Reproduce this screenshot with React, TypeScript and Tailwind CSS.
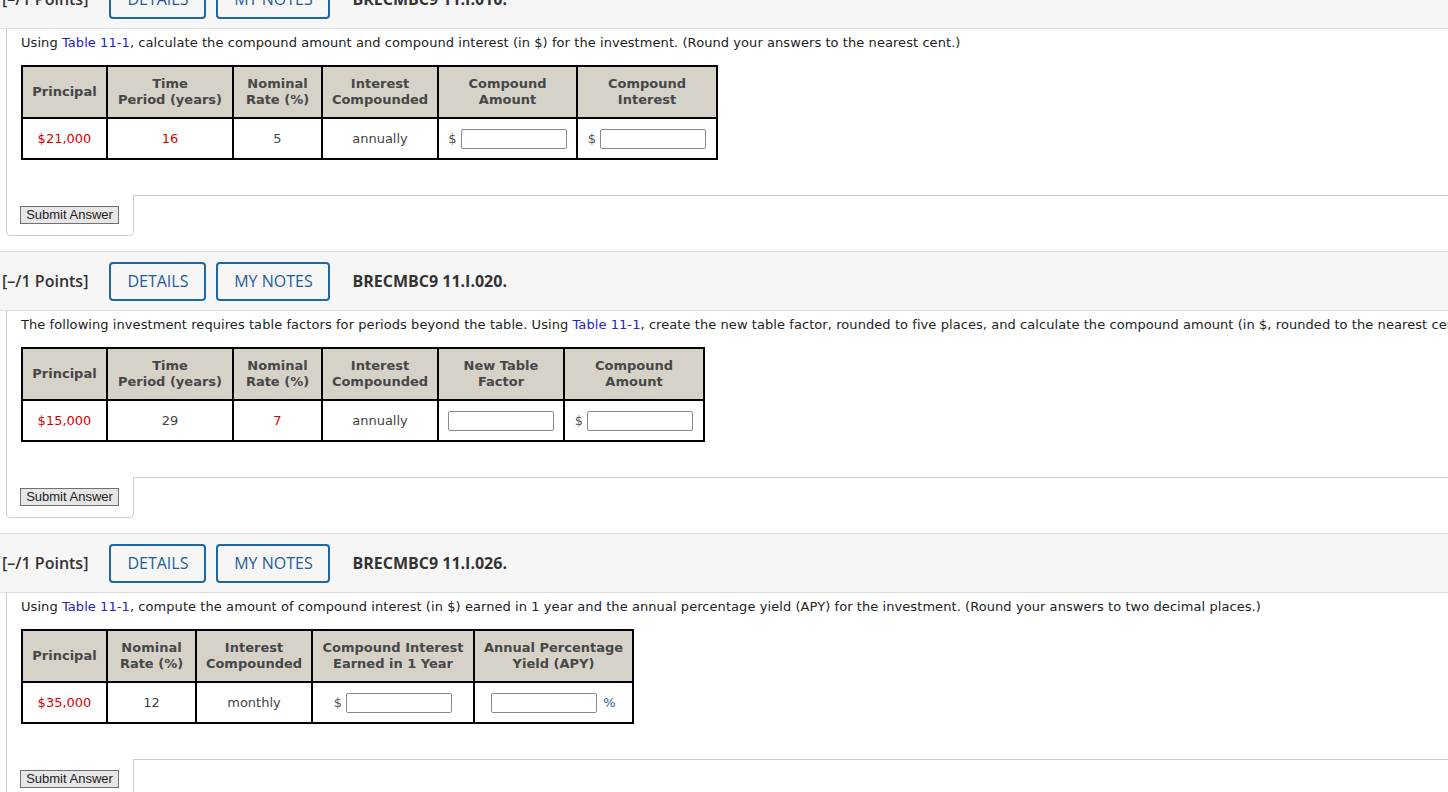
import React from "react";

type Cell =
  | { kind: "text"; value: string; red?: boolean }
  | { kind: "input"; prefix?: string; suffix?: string };

interface Question {
  code: string;
  text: React.ReactNode;
  widths: number[];
  headers: string[][];
  row: Cell[];
}

function TableLink() {
  return <span className="text-[#2424c8]">Table 11-1</span>;
}

const questions: Question[] = [
  {
    code: "BRECMBC9 11.I.010.",
    text: (
      <>
        Using <TableLink />, calculate the compound amount and compound interest (in $) for the investment. (Round your
        answers to the nearest cent.)
      </>
    ),
    widths: [85, 126, 89, 116, 139, 140],
    headers: [["Principal"], ["Time", "Period (years)"], ["Nominal", "Rate (%)"], ["Interest", "Compounded"], ["Compound", "Amount"], ["Compound", "Interest"]],
    row: [
      { kind: "text", value: "$21,000", red: true },
      { kind: "text", value: "16", red: true },
      { kind: "text", value: "5" },
      { kind: "text", value: "annually" },
      { kind: "input", prefix: "$" },
      { kind: "input", prefix: "$" },
    ],
  },
  {
    code: "BRECMBC9 11.I.020.",
    text: (
      <>
        The following investment requires table factors for periods beyond the table. Using <TableLink />, create the new
        table factor, rounded to five places, and calculate the compound amount (in $, rounded to the nearest cent.)
      </>
    ),
    widths: [85, 126, 89, 116, 126, 140],
    headers: [["Principal"], ["Time", "Period (years)"], ["Nominal", "Rate (%)"], ["Interest", "Compounded"], ["New Table", "Factor"], ["Compound", "Amount"]],
    row: [
      { kind: "text", value: "$15,000", red: true },
      { kind: "text", value: "29" },
      { kind: "text", value: "7", red: true },
      { kind: "text", value: "annually" },
      { kind: "input" },
      { kind: "input", prefix: "$" },
    ],
  },
  {
    code: "BRECMBC9 11.I.026.",
    text: (
      <>
        Using <TableLink />, compute the amount of compound interest (in $) earned in 1 year and the annual percentage yield
        (APY) for the investment. (Round your answers to two decimal places.)
      </>
    ),
    widths: [85, 89, 116, 162, 159],
    headers: [["Principal"], ["Nominal", "Rate (%)"], ["Interest", "Compounded"], ["Compound Interest", "Earned in 1 Year"], ["Annual Percentage", "Yield (APY)"]],
    row: [
      { kind: "text", value: "$35,000", red: true },
      { kind: "text", value: "12" },
      { kind: "text", value: "monthly" },
      { kind: "input", prefix: "$" },
      { kind: "input", suffix: "%" },
    ],
  },
];

function AnswerBox() {
  return <span className="inline-block h-[20px] w-[106px] rounded-[2px] border border-[#8a8a8a] bg-white" />;
}

function QuestionHeader({ code }: { code: string }) {
  return (
    <div className="flex h-[60px] items-center border-y border-[#dedede] bg-[#f6f6f6] pl-[2px] font-['Open_Sans',sans-serif] text-[16px] text-[#333]">
      <span className="font-semibold">[–/1 Points]</span>
      <button className="ml-[21px] h-[39px] w-[97px] rounded-[4px] border-2 border-[#1f67a0] text-[#1f5c99]">DETAILS</button>
      <button className="ml-[10px] h-[39px] w-[114px] rounded-[4px] border-2 border-[#1f67a0] text-[#1f5c99]">MY NOTES</button>
      <span className="ml-[22px] font-bold">{code}</span>
    </div>
  );
}

function QuestionTable({ q }: { q: Question }) {
  const total = q.widths.reduce((a, b) => a + b, 0);
  return (
    <table className="table-fixed border-collapse border-2 border-black" style={{ width: total }}>
      <colgroup>
        {q.widths.map((w, i) => (
          <col key={i} style={{ width: w }} />
        ))}
      </colgroup>
      <thead>
        <tr className="h-[52px] bg-[#d6d2c8]">
          {q.headers.map((lines, i) => (
            <th key={i} className="border-2 border-black p-0 text-center text-[13px] font-bold leading-[16px] text-[#474747]">
              {lines.map((l) => (
                <div key={l}>{l}</div>
              ))}
            </th>
          ))}
        </tr>
      </thead>
      <tbody>
        <tr className="h-[41px]">
          {q.row.map((c, i) => (
            <td key={i} className="border-2 border-black p-0 text-center text-[13px] text-[#444]">
              {c.kind === "text" ? (
                <span className={c.red ? "text-[#d80000]" : ""}>{c.value}</span>
              ) : (
                <div className="flex items-center justify-center gap-[4px]">
                  {c.prefix && <span className="text-[#555]">{c.prefix}</span>}
                  <AnswerBox />
                  {c.suffix && <span className="ml-[2px] text-[#2b5f96]">{c.suffix}</span>}
                </div>
              )}
            </td>
          ))}
        </tr>
      </tbody>
    </table>
  );
}

function QuestionBlock({ q }: { q: Question }) {
  return (
    <section className="mb-[15px]">
      <QuestionHeader code={q.code} />
      <div className="ml-[6px] border-l border-[#cccccc] pl-[14px] pt-[5px] font-['DejaVu_Sans',Verdana,sans-serif]">
        <p className="whitespace-nowrap text-[13px] leading-[18px] tracking-[0.07px] text-[#222]">{q.text}</p>
        <div className="mt-[13px]">
          <QuestionTable q={q} />
        </div>
        <div className="h-[35px]" />
      </div>
      <div className="ml-[6px] flex">
        <div className="flex h-[41px] w-[128px] items-start rounded-b-[5px] border-x border-b border-[#cccccc] pl-[13px] pt-[11px]">
          <button className="h-[18px] w-[99px] border border-[#707070] bg-[#e6e6e6] font-['Liberation_Sans',Arial,sans-serif] text-[13px] leading-[16px] text-[#222]">
            Submit Answer
          </button>
        </div>
        <div className="flex-1 border-t border-[#cccccc]" />
      </div>
    </section>
  );
}

export default function App() {
  return (
    <div className="h-[792px] w-[1448px] overflow-hidden bg-white">
      <div className="-mt-[31px]">
        {questions.map((q) => (
          <QuestionBlock key={q.code} q={q} />
        ))}
      </div>
    </div>
  );
}
